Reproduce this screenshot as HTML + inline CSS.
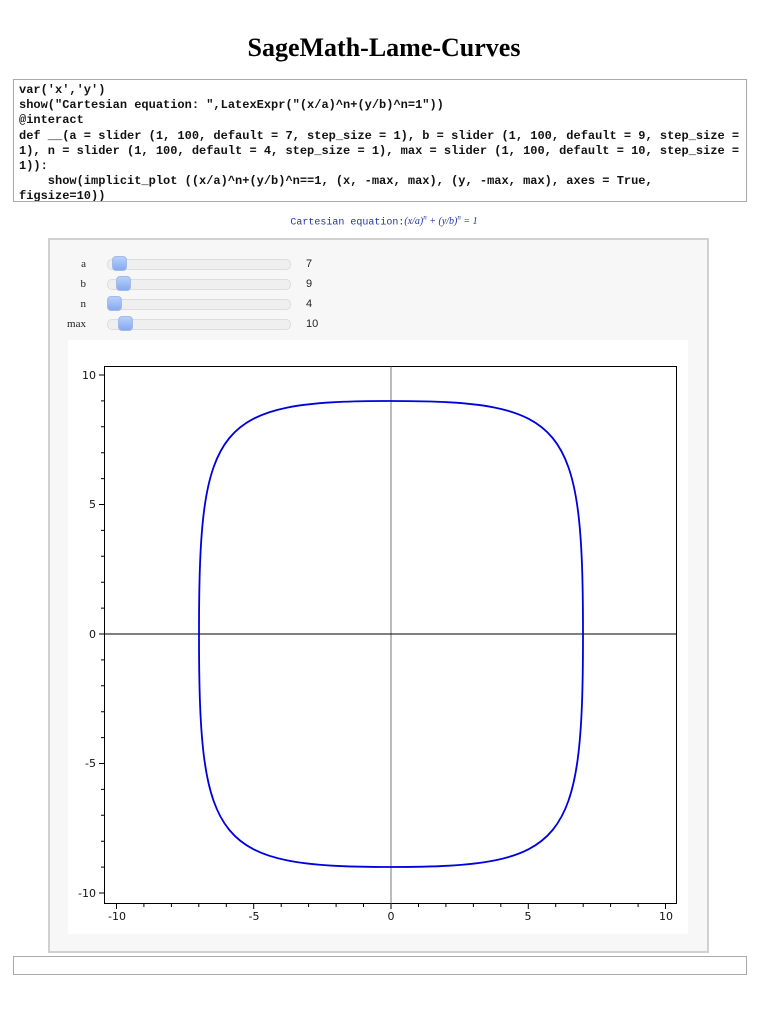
<!DOCTYPE html>
<html><head><meta charset="utf-8"><style>
body{margin:0;width:768px;height:1024px;background:#fff;position:relative;font-family:"Liberation Sans",sans-serif;overflow:hidden}
h1{position:absolute;top:33px;left:0;width:768px;text-align:center;margin:0;font:bold 26px "Liberation Serif",serif;color:#000}
.code{position:absolute;left:13px;top:79px;width:734px;height:123px;border:1px solid #aaa;box-sizing:border-box;padding:3px 5px;font:bold 12px/15.2px "Liberation Mono",monospace;white-space:pre;color:#111;overflow:hidden}
.eq{position:absolute;top:214px;left:0;width:768px;text-align:center;font:10px "Liberation Mono",monospace;color:#2233aa}
.eq i{font-family:"Liberation Serif",serif}
.panel{position:absolute;left:48px;top:238px;width:661px;height:715px;background:#f7f7f7;border:2px solid #d0d0d0;box-sizing:border-box}
.plot{position:absolute;left:68px;top:340px;width:620px;height:594px;background:#fff}
.lab{position:absolute;font:11px "Liberation Serif",serif;color:#222;text-align:right;width:40px}
.tr{position:absolute;left:107px;width:182px;height:9px;border:1px solid #ddd;border-radius:5px;background:#efefef}
.th{position:absolute;width:15px;height:15px;border-radius:4px;background:linear-gradient(#b8cffa,#86a8ee);border:1px solid #a3bbe8;box-sizing:border-box}
.val{position:absolute;left:306px;font:11px "Liberation Sans",sans-serif;color:#222}
.bot{position:absolute;left:13px;top:956px;width:734px;height:19px;border:1px solid #aaa;box-sizing:border-box}
svg{position:absolute;left:0;top:0}
</style></head><body>
<h1>SageMath-Lame-Curves</h1>
<div class="code">var('x','y')
show("Cartesian equation: ",LatexExpr("(x/a)^n+(y/b)^n=1"))
@interact
def __(a = slider (1, 100, default = 7, step_size = 1), b = slider (1, 100, default = 9, step_size =
1), n = slider (1, 100, default = 4, step_size = 1), max = slider (1, 100, default = 10, step_size =
1)):
    show(implicit_plot ((x/a)^n+(y/b)^n==1, (x, -max, max), (y, -max, max), axes = True,
figsize=10))</div>
<div class="eq">Cartesian equation:<i>(x/a)<sup style="font-size:7px">n</sup> + (y/b)<sup style="font-size:7px">n</sup> = 1</i></div>
<div class="panel"></div>
<div class="lab" style="left:46px;top:258px">a</div>
<div class="lab" style="left:46px;top:278px">b</div>
<div class="lab" style="left:46px;top:298px">n</div>
<div class="lab" style="left:46px;top:318px">max</div>
<div class="tr" style="top:259px"></div><div class="th" style="left:112px;top:256px"></div>
<div class="tr" style="top:279px"></div><div class="th" style="left:116px;top:276px"></div>
<div class="tr" style="top:299px"></div><div class="th" style="left:107px;top:296px"></div>
<div class="tr" style="top:319px"></div><div class="th" style="left:118px;top:316px"></div>
<div class="val" style="top:258px">7</div>
<div class="val" style="top:278px">9</div>
<div class="val" style="top:298px">4</div>
<div class="val" style="top:318px">10</div>
<div class="plot"></div>
<svg width="768" height="1024">
<g stroke="#000" stroke-width="1" fill="none">
<rect x="104.5" y="366.5" width="572" height="537"/>
<line x1="391" y1="366" x2="391" y2="904" stroke="#555" stroke-width="0.8"/>
<line x1="104" y1="634" x2="677" y2="634"/>
<path d="M116.5,904v5M253.7,904v5M391,904v5M528.3,904v5M665.5,904v5
M143.9,904v3M171.4,904v3M198.8,904v3M226.3,904v3M281.2,904v3M308.6,904v3M336.1,904v3M363.5,904v3M418.5,904v3M445.9,904v3M473.4,904v3M500.8,904v3M555.7,904v3M583.2,904v3M610.6,904v3M638.1,904v3
M104,375h-5M104,504.5h-5M104,634h-5M104,763.5h-5M104,893h-5
M104,400.9h-3M104,426.8h-3M104,452.7h-3M104,478.6h-3M104,530.4h-3M104,556.3h-3M104,582.2h-3M104,608.1h-3M104,659.9h-3M104,685.8h-3M104,711.7h-3M104,737.6h-3M104,789.4h-3M104,815.3h-3M104,841.2h-3M104,867.1h-3"/>
</g>
<path d="M583,634 C583,422 566,401 391,401 C216,401 199,422 199,634 C199,846 216,867 391,867 C566,867 583,846 583,634Z" fill="none" stroke="#0000dd" stroke-width="1.8"/>
<g font-family="DejaVu Sans,sans-serif" font-size="11" fill="#111">
<text x="117" y="920" text-anchor="middle">-10</text>
<text x="254" y="920" text-anchor="middle">-5</text>
<text x="391" y="920" text-anchor="middle">0</text>
<text x="528" y="920" text-anchor="middle">5</text>
<text x="666" y="920" text-anchor="middle">10</text>
<text x="96" y="379" text-anchor="end">10</text>
<text x="96" y="508" text-anchor="end">5</text>
<text x="96" y="638" text-anchor="end">0</text>
<text x="96" y="767" text-anchor="end">-5</text>
<text x="96" y="897" text-anchor="end">-10</text>
</g>
</svg>
<div class="bot"></div>
</body></html>
